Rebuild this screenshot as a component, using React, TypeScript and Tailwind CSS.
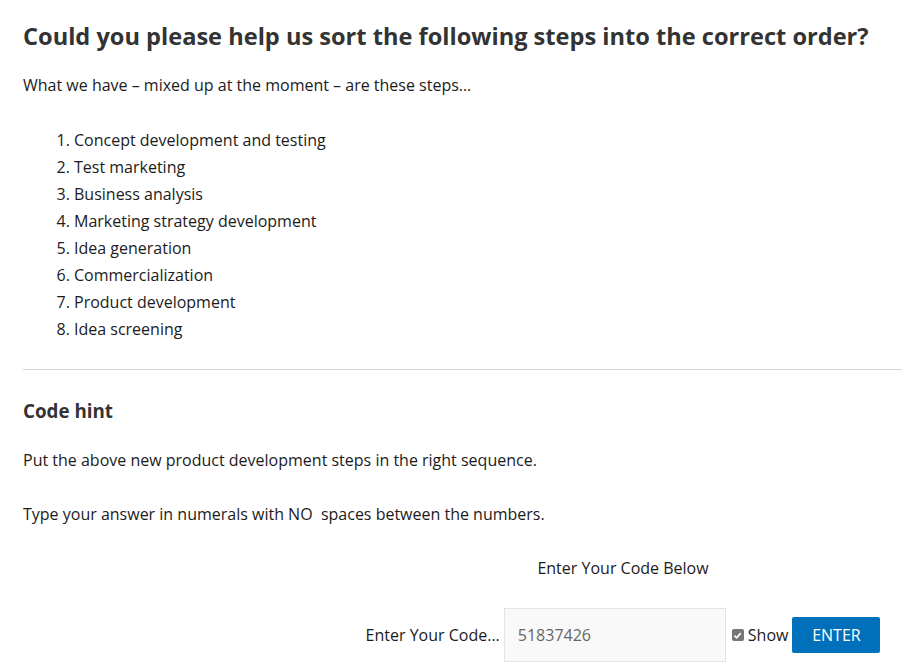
import React, { useState } from 'react';

const steps = [
  'Concept development and testing',
  'Test marketing',
  'Business analysis',
  'Marketing strategy development',
  'Idea generation',
  'Commercialization',
  'Product development',
  'Idea screening',
];

const App: React.FC = () => {
  const [code, setCode] = useState('51837426');
  const [show, setShow] = useState(true);

  return (
    <div className="w-full min-h-[668px] overflow-hidden bg-white text-[#1b1b1b] font-['Open_Sans',sans-serif]">
      <div className="w-[1200px] ml-[23px] pt-[20px]">
        <h1 className="text-[23.6px] leading-[32px] font-bold text-[#333]">
          Could you please help us sort the following steps into the correct order?
        </h1>
        <p className="mt-[21px] text-[16px] leading-[24px]">
          What we have – mixed up at the moment – are these steps…
        </p>
        <ol className="mt-[30px] list-decimal pl-[51px] text-[16px] leading-[27px]">
          {steps.map((s) => (
            <li key={s}>{s}</li>
          ))}
        </ol>
        <hr className="mt-[26px] border-0 border-t border-[#d6d6d6]" />
        <h2 className="mt-[29px] text-[18.8px] leading-[24px] font-bold text-[#333]">Code hint</h2>
        <p className="mt-[25px] text-[16px] leading-[24px]">
          Put the above new product development steps in the right sequence.
        </p>
        <p className="mt-[30px] text-[16px] leading-[24px]">
          Type your answer in numerals with NO&nbsp; spaces between the numbers.
        </p>

        <div className="mt-[30px] flex flex-col items-center">
          <p className="text-[16px] leading-[24px]">Enter Your Code Below</p>
          <div className="mt-[28px] flex items-center">
            <label className="text-[16px] leading-[24px] mr-[4px]">Enter Your Code...</label>
            <input
              type={show ? 'text' : 'password'}
              value={code}
              onChange={(e) => setCode(e.target.value)}
              className="w-[222px] h-[54px] px-[13px] bg-[#f9f9f9] border border-[#e3e3e3] text-[16px] text-[#666] outline-none font-['Open_Sans',sans-serif]"
            />
            <label className="ml-[6px] flex items-center cursor-pointer" onClick={() => setShow(!show)}>
              <span className="w-[12px] h-[12px] rounded-[2px] bg-[#767676] flex items-center justify-center">
                {show && (
                  <svg width="9" height="9" viewBox="0 0 10 10">
                    <path d="M1.5 5.2 L4 7.6 L8.6 2.4" fill="none" stroke="#fff" strokeWidth="1.8" />
                  </svg>
                )}
              </span>
              <span className="ml-[4px] text-[16px] leading-[24px]">Show</span>
            </label>
            <button className="ml-[4px] w-[88px] h-[36px] bg-[#0070ba] text-white text-[16px] rounded-[2px]">
              ENTER
            </button>
          </div>
        </div>
      </div>
    </div>
  );
};

export default App;
